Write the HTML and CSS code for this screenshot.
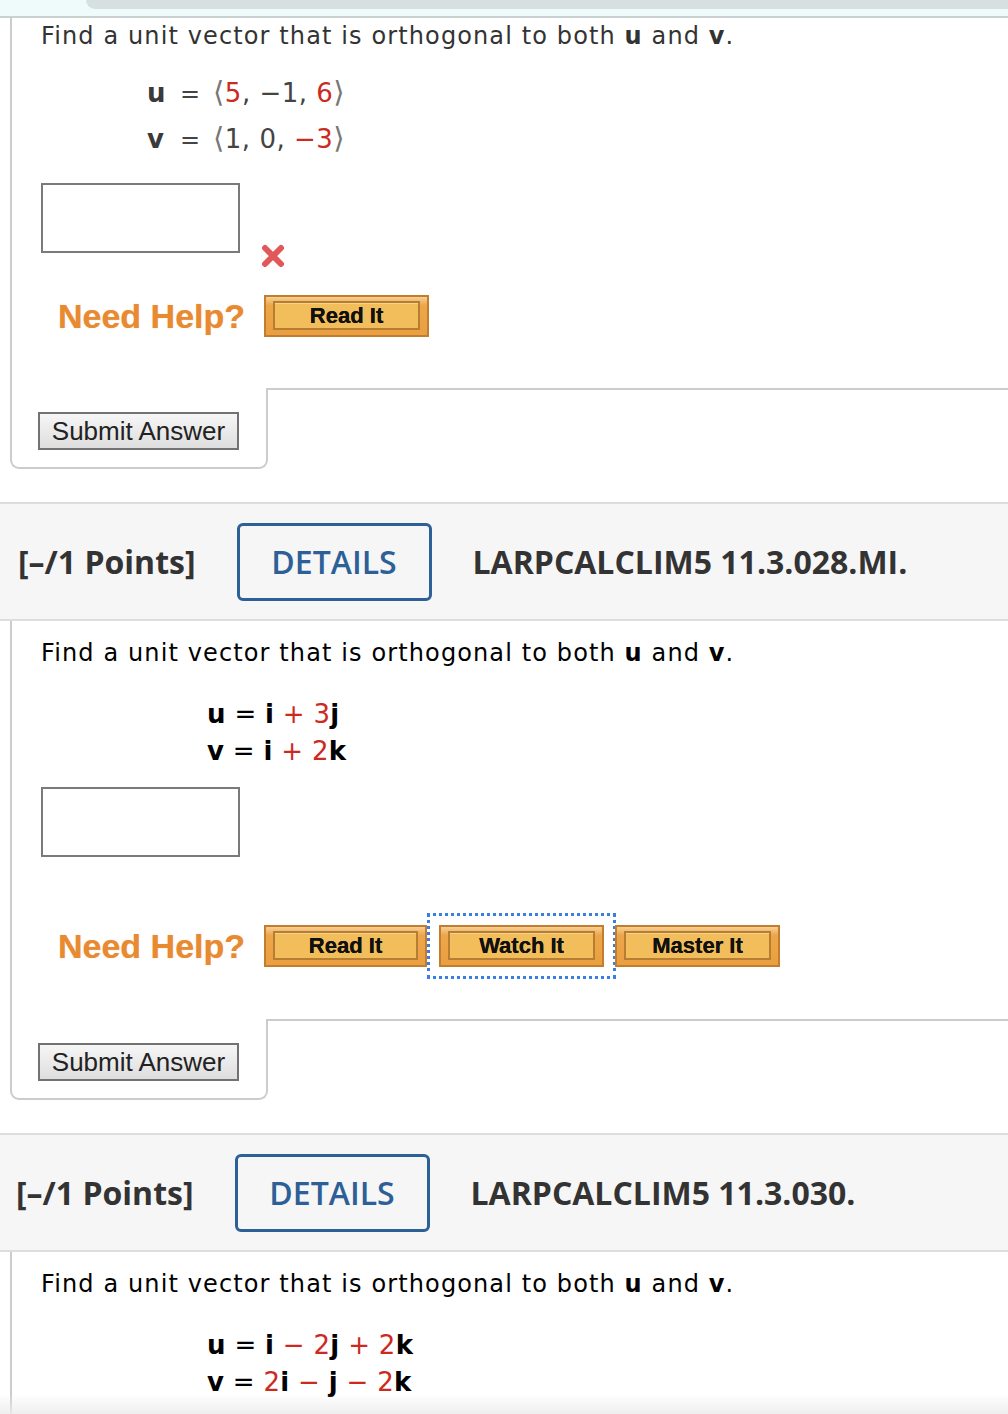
FILE: index.html
```html
<!DOCTYPE html>
<html lang="en">
<head>
<meta charset="utf-8">
<title>Questions</title>
<link rel="stylesheet" href="styles.css">
</head>
<body>
<div class="topstrip"><div class="toptab"></div></div>

<section class="question">
  <div class="qbody qbody--cut">
    <p class="prompt prompt--gray">Find a unit vector that is orthogonal to both <b>u</b> and <b>v</b>.</p>
    <div class="tuple">
      <div class="trow"><b class="tvar">u</b><span class="teq">=</span><span class="br">⟨</span><span class="red">5</span>, −1, <span class="red">6</span><span class="br">⟩</span></div>
      <div class="trow"><b class="tvar">v</b><span class="teq">=</span><span class="br">⟨</span>1, 0, <span class="red">−3</span><span class="br">⟩</span></div>
    </div>
    <div class="answer-row">
      <div class="answer"></div>
      <svg class="xmark" viewBox="0 0 26 26" width="26" height="26" aria-hidden="true">
        <path d="M5 5 L21 21 M21 5 L5 21" stroke="#e2575a" stroke-width="6" stroke-linecap="round" fill="none"/>
      </svg>
    </div>
    <div class="help-row">
      <span class="need-help">Need Help?</span>
      <div class="help-btns">
        <button class="help-btn"><span>Read It</span></button>
      </div>
    </div>
  </div>
  <div class="qfoot">
    <div class="submit-cell"><button class="submit">Submit Answer</button></div>
    <div class="foot-rest"></div>
  </div>
</section>

<header class="qhead">
  <span class="points">[–/1 Points]</span>
  <button class="details">DETAILS</button>
  <span class="qid">LARPCALCLIM5 11.3.028.MI.</span>
</header>

<section class="question">
  <div class="qbody">
    <p class="prompt">Find a unit vector that is orthogonal to both <b>u</b> and <b>v</b>.</p>
    <div class="vec">
      <div class="vrow"><b>u</b> = <b>i</b> <span class="red">+ 3</span><b>j</b></div>
      <div class="vrow"><b>v</b> = <b>i</b> <span class="red">+ 2</span><b>k</b></div>
    </div>
    <div class="answer-row answer-row--plain">
      <div class="answer"></div>
    </div>
    <div class="help-row help-row--wide">
      <span class="need-help">Need Help?</span>
      <div class="help-btns">
        <button class="help-btn help-btn--narrow"><span>Read It</span></button>
        <button class="help-btn help-btn--focus"><span>Watch It</span></button>
        <button class="help-btn"><span>Master It</span></button>
      </div>
    </div>
  </div>
  <div class="qfoot">
    <div class="submit-cell"><button class="submit">Submit Answer</button></div>
    <div class="foot-rest"></div>
  </div>
</section>

<header class="qhead qhead--shift">
  <span class="points">[–/1 Points]</span>
  <button class="details">DETAILS</button>
  <span class="qid">LARPCALCLIM5 11.3.030.</span>
</header>

<section class="question">
  <div class="qbody">
    <p class="prompt">Find a unit vector that is orthogonal to both <b>u</b> and <b>v</b>.</p>
    <div class="vec">
      <div class="vrow"><b>u</b> = <b>i</b> <span class="red">− 2</span><b>j</b> <span class="red">+ 2</span><b>k</b></div>
      <div class="vrow"><b>v</b> = <span class="red">2</span><b>i</b> <span class="red">−</span> <b>j</b> <span class="red">− 2</span><b>k</b></div>
    </div>
  </div>
</section>

<div class="bottom-fade"></div>
</body>
</html>
```

FILE: styles.css
```css
html, body {
  margin: 0;
  padding: 0;
  background: #ffffff;
}

body {
  width: 1008px;
  overflow: hidden;
  font-family: "DejaVu Sans", Verdana, sans-serif;
  color: #000;
}

/* top strip */
.topstrip {
  height: 16px;
  background: #effafa;
  border-bottom: 2px solid #c9d1d1;
}

.toptab {
  margin-left: 86px;
  height: 9px;
  background: #d7e0e0;
  border-bottom-left-radius: 14px;
}

/* question body */
.qbody {
  margin-left: 10px;
  border-left: 2px solid #cccccc;
  padding: 17px 0 52px 29px;
}

.qbody--cut {
  padding-top: 3px;
  padding-bottom: 51px;
}

.prompt {
  margin: 0;
  font-size: 24px;
  line-height: 30px;
  letter-spacing: 1.12px;
  color: #000;
  white-space: nowrap;
}

.prompt--gray {
  color: #333333;
}

.red {
  color: #cc2a1f;
}

/* tuple math (question 1) */
.tuple {
  margin: 18px 0 0 106px;
  font-size: 26px;
  line-height: 46px;
  color: #444444;
  letter-spacing: 0.5px;
}

.trow {
  display: flex;
  align-items: baseline;
  height: 46px;
  white-space: pre;
}

.tvar {
  color: #3a3a3a;
  width: 33px;
}

.teq {
  width: 33px;
  font-size: 24px;
}

.br {
  color: #777777;
  font-size: 29px;
  line-height: 46px;
}

/* vector math (questions 2, 3) */
.vec {
  margin: 28px 0 0 166px;
  font-size: 26px;
  line-height: 37px;
  letter-spacing: 0.3px;
  color: #000;
}

.vrow {
  height: 37px;
  white-space: pre;
}

.vec b {
  font-weight: bold;
}

/* answer input */
.answer-row {
  display: flex;
  align-items: flex-start;
  gap: 20px;
  margin-top: 22px;
}

.answer-row--plain {
  margin-top: 17px;
}

.answer {
  width: 195px;
  height: 66px;
  border: 2px solid #7a7a7a;
  background: #fff;
}

.xmark {
  margin-top: 60px;
  filter: blur(0.4px);
}

/* need help */
.help-row {
  display: flex;
  align-items: center;
  margin-top: 26px;
  padding-left: 17px;
}

.help-row--wide {
  margin-top: 68px;
}

.need-help {
  font-family: "Liberation Sans", Arial, sans-serif;
  font-weight: bold;
  font-size: 34px;
  color: #e88a32;
  text-shadow: 0 0 1px rgba(232, 138, 50, 0.6);
  margin-right: 19px;
  line-height: 42px;
}

.help-btns {
  display: flex;
  gap: 11px;
}

.help-btn {
  display: block;
  width: 165px;
  height: 42px;
  margin: 0;
  padding: 4px 7px 5px 7px;
  border: 2px solid #c27d2e;
  background: linear-gradient(#f7cf94 0%, #eca649 22%, #ea9f40 100%);
  cursor: pointer;
}

.help-btn--narrow {
  width: 163px;
  margin-right: 1px;
}

.help-btn span {
  display: block;
  height: 100%;
  box-sizing: border-box;
  border: 2px solid #b77d32;
  background: #f2be5b;
  box-shadow: inset 0 1px 0 #f7d48a;
  font-family: "Liberation Sans", Arial, sans-serif;
  font-weight: bold;
  font-size: 22px;
  line-height: 25px;
  color: #111;
  text-align: center;
  text-shadow: 0 0 0.6px #000;
}

.help-btn--focus {
  outline: 3px dotted #3a7fe0;
  outline-offset: 9px;
}

/* footer with submit */
.qfoot {
  display: flex;
}

.submit-cell {
  margin-left: 10px;
  width: 228px;
  border: 2px solid #cccccc;
  border-top: none;
  border-radius: 0 0 9px 9px;
  padding: 24px 0 17px 26px;
}

.foot-rest {
  flex: 1;
  border-top: 2px solid #cccccc;
}

.submit {
  display: block;
  width: 201px;
  height: 38px;
  margin: 0;
  padding: 0;
  border: 2px solid #727272;
  background: linear-gradient(#f6f6f6, #dedede);
  font-family: "Liberation Sans", Arial, sans-serif;
  font-size: 26px;
  line-height: 32px;
  color: #222;
  text-align: center;
}

/* question header */
.qhead {
  margin-top: 33px;
  height: 115px;
  display: flex;
  align-items: center;
  gap: 41px;
  padding-left: 18px;
  background: #f6f6f6;
  border-top: 2px solid #dddddd;
  border-bottom: 2px solid #dddddd;
  font-family: "Open Sans", sans-serif;
}

.qhead--shift {
  padding-left: 16px;
}

.points,
.qid {
  font-weight: 700;
  font-size: 32px;
  color: #333333;
  white-space: nowrap;
}

.details {
  width: 195px;
  height: 78px;
  margin: 0;
  padding: 0;
  border: 3px solid #2c6096;
  border-radius: 6px;
  background: transparent;
  font-family: "Open Sans", sans-serif;
  font-weight: 600;
  font-size: 32px;
  color: #2c6096;
}

.bottom-fade {
  position: fixed;
  left: 0;
  right: 0;
  bottom: 0;
  height: 20px;
  background: linear-gradient(rgba(240, 240, 240, 0), rgba(236, 236, 236, 0.85));
  pointer-events: none;
}
```
